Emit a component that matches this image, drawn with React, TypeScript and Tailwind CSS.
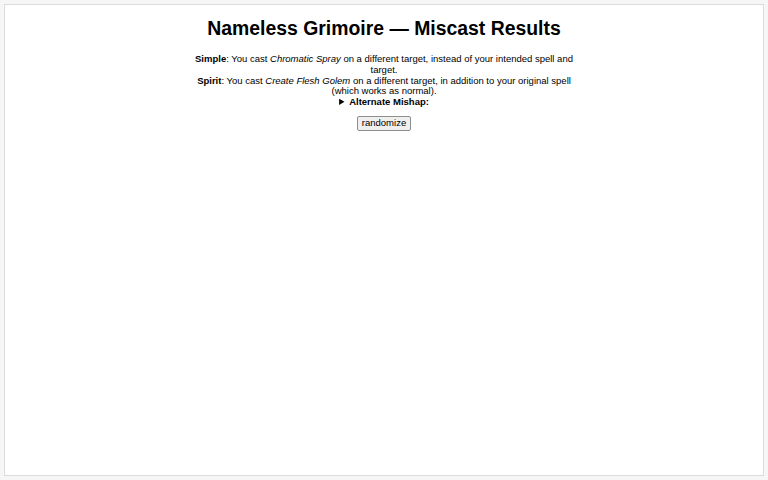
import { useState } from 'react';

const spells = ['Chromatic Spray', 'Create Flesh Golem', 'Fireball', 'Magic Missile', 'Slow', 'Haste'];

export default function App() {
  const [simple, setSimple] = useState('Chromatic Spray');
  const [spirit, setSpirit] = useState('Create Flesh Golem');

  const randomize = () => {
    setSimple(spells[Math.floor(Math.random() * spells.length)]);
    setSpirit(spells[Math.floor(Math.random() * spells.length)]);
  };

  return (
    <div className="min-h-screen bg-[#f6f6f6] p-1 font-['Liberation_Sans',Arial,sans-serif] text-black">
      <div className="h-[472px] border border-[#dcdcdc] bg-white text-center">
        <h1 className="mt-[10px] text-[19.4px] font-bold leading-[26px]">Nameless Grimoire — Miscast Results</h1>
        <div className="mx-auto mt-[13px] w-[392px] text-[9.5px] leading-[10.75px]">
          <div>
            <b>Simple</b>: You cast <i>{simple}</i> on a different target, instead of your intended spell and target.
          </div>
          <div>
            <b>Spirit</b>: You cast <i>{spirit}</i> on a different target, in addition to your original spell (which works as normal).
          </div>
          <details>
            <summary className="cursor-pointer font-bold">Alternate Mishap:</summary>
          </details>
          <button
            onClick={randomize}
            className="mt-[8px] h-[15px] rounded-[2px] border border-[#8f8f8f] bg-[#efefef] px-[4px] text-[9.5px] leading-[12px]"
          >
            randomize
          </button>
        </div>
      </div>
    </div>
  );
}
